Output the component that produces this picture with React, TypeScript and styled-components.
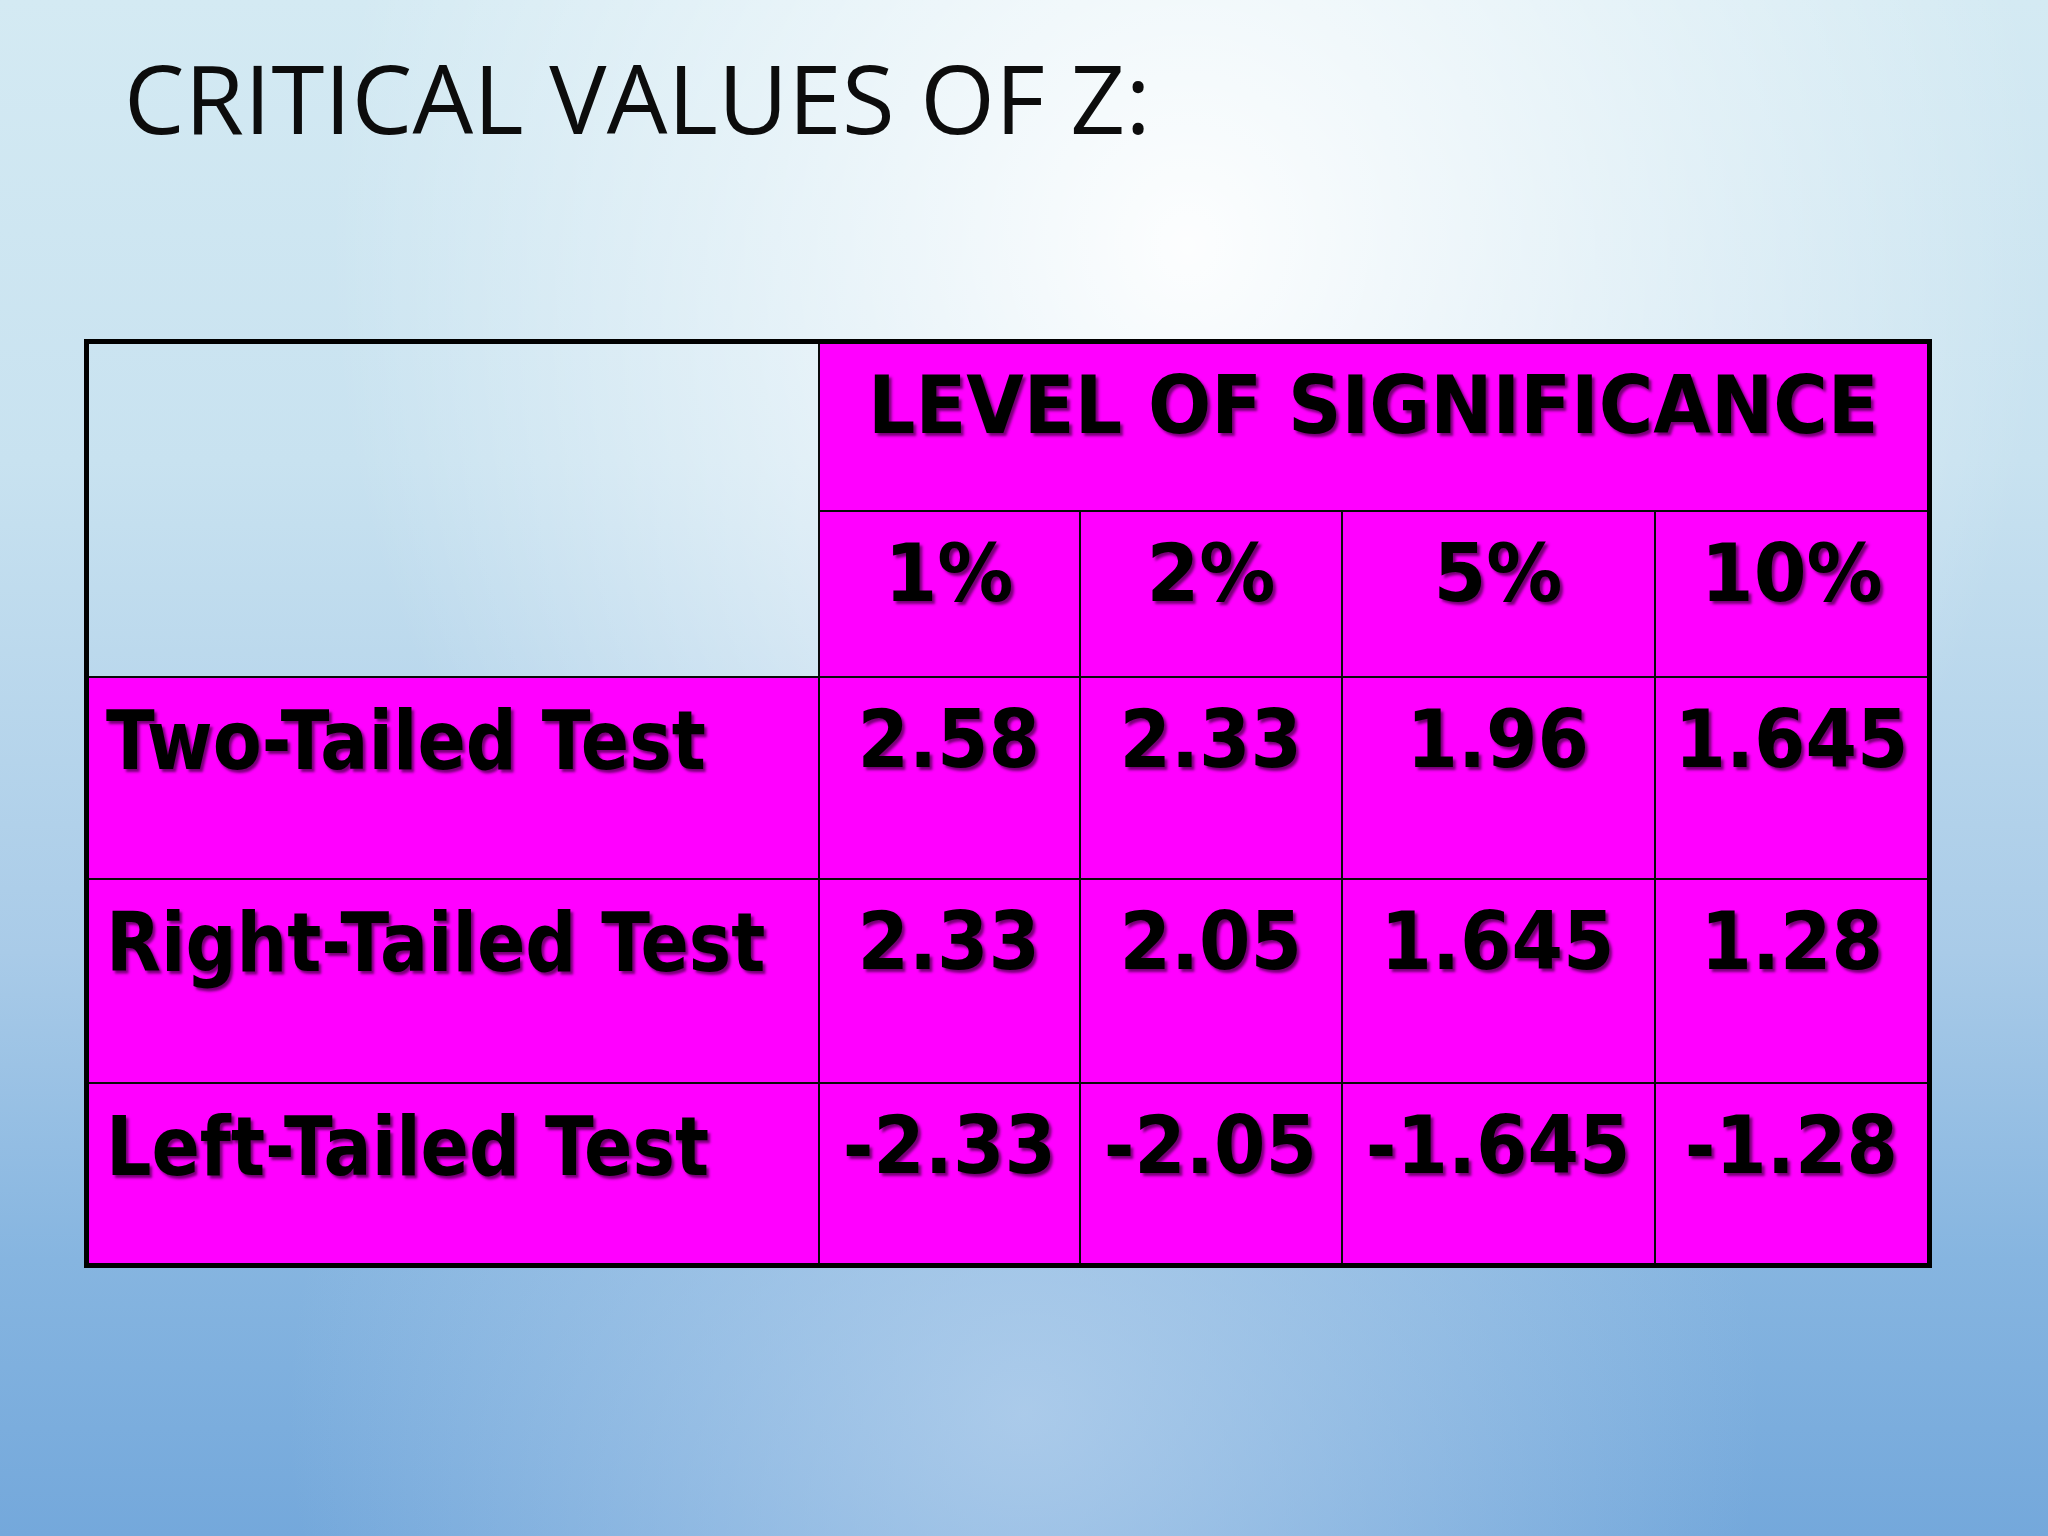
import styled, { createGlobalStyle } from 'styled-components';

const GlobalStyle = createGlobalStyle`
  html, body {
    margin: 0;
    padding: 0;
  }
  body {
    width: 2048px;
    height: 1536px;
    overflow: hidden;
  }
`;

const Slide = styled.div`
  width: 2048px;
  height: 1536px;
  box-sizing: border-box;
  padding: 49px 0 0 84px;
  background:
    radial-gradient(ellipse 42% 62% at 58% 16%, rgba(255, 255, 255, 0.95), rgba(255, 255, 255, 0) 100%),
    radial-gradient(ellipse 36% 45% at 50% 92%, rgba(186, 212, 238, 0.75), rgba(186, 212, 238, 0) 100%),
    linear-gradient(180deg, #d4eaf3 0%, #c8e2f0 30%, #a9cbe8 62%, #86b5e0 82%, #74a8db 100%);
`;

const Title = styled.h1`
  margin: 0 0 194px 40px;
  font-family: 'Open Sans', 'DejaVu Sans', sans-serif;
  font-weight: 400;
  font-size: 96px;
  line-height: 1;
  color: #0c0c0c;
  letter-spacing: 0.3px;
`;

const Table = styled.table`
  border-collapse: collapse;
  table-layout: fixed;
  width: 1843px;
  border: 5px solid #000;
`;

const Row = styled.tr<{ $h: number }>`
  height: ${(p) => p.$h}px;
`;

const Cell = styled.td<{ $blank?: boolean; $left?: boolean }>`
  border: 2px solid #0a0a0a;
  background: ${(p) => (p.$blank ? 'transparent' : '#ff00ff')};
  vertical-align: top;
  padding: 22px 0 0 ${(p) => (p.$left ? '17px' : '0')};
  text-align: ${(p) => (p.$left ? 'left' : 'center')};
  white-space: nowrap;
  overflow: visible;
`;

const Text = styled.span<{ $sx: number; $size: number; $left?: boolean }>`
  display: inline-block;
  font-family: 'DejaVu Sans', Verdana, sans-serif;
  font-weight: 700;
  font-size: ${(p) => p.$size}px;
  line-height: 1;
  color: #000;
  text-shadow: 3px 3px 3px rgba(60, 0, 60, 0.7);
  transform: scaleX(${(p) => p.$sx});
  transform-origin: ${(p) => (p.$left ? 'left center' : 'center center')};
`;

const levels = ['1%', '2%', '5%', '10%'];

const rows = [
  { label: 'Two-Tailed Test', values: ['2.58', '2.33', '1.96', '1.645'], h: 202 },
  { label: 'Right-Tailed Test', values: ['2.33', '2.05', '1.645', '1.28'], h: 204 },
  { label: 'Left-Tailed Test', values: ['-2.33', '-2.05', '-1.645', '-1.28'], h: 183 },
];

export default function App() {
  return (
    <>
      <GlobalStyle />
      <Slide>
        <Title>CRITICAL VALUES OF Z:</Title>
        <Table>
          <colgroup>
            <col style={{ width: 732 }} />
            <col style={{ width: 261 }} />
            <col style={{ width: 262 }} />
            <col style={{ width: 313 }} />
            <col style={{ width: 275 }} />
          </colgroup>
          <tbody>
            <Row $h={169}>
              <Cell $blank rowSpan={2} />
              <Cell colSpan={4}>
                <Text $sx={0.93} $size={80}>
                  LEVEL OF SIGNIFICANCE
                </Text>
              </Cell>
            </Row>
            <Row $h={166}>
              {levels.map((l) => (
                <Cell key={l}>
                  <Text $sx={0.95} $size={80}>
                    {l}
                  </Text>
                </Cell>
              ))}
            </Row>
            {rows.map((r) => (
              <Row key={r.label} $h={r.h}>
                <Cell $left>
                  <Text $left $sx={0.87} $size={82}>
                    {r.label}
                  </Text>
                </Cell>
                {r.values.map((v, i) => (
                  <Cell key={i}>
                    <Text $sx={0.925} $size={80}>
                      {v}
                    </Text>
                  </Cell>
                ))}
              </Row>
            ))}
          </tbody>
        </Table>
      </Slide>
    </>
  );
}
